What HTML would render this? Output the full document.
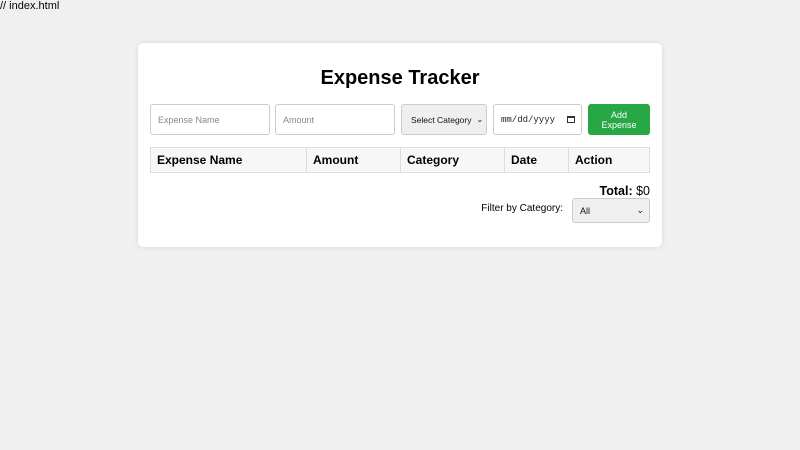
<!DOCTYPE html>
<html><head><style>
*{box-sizing:border-box;margin:0;padding:0}
body{width:800px;height:450px;background:#f0f0f0;font-family:"Liberation Sans",sans-serif;position:relative;overflow:hidden}
.a{position:absolute;white-space:nowrap}
.card{left:138px;top:43px;width:524px;height:204px;background:#fff;border-radius:5px;box-shadow:0 0 6px rgba(0,0,0,.1)}
.inp{border:1px solid #ccc;border-radius:3px;background:#fff;font-size:9px;color:#888;padding-left:7px;display:flex;align-items:center}
th{font-weight:bold;text-align:left;font-size:12px;padding-left:6px;border:1px solid #ddd;background:#f7f7f7;height:25px}
table{border-collapse:collapse}
</style></head><body>
<div class="a" style="left:0;top:0;font-size:11px">// index.html</div>
<div class="a card"></div>
<div class="a" style="left:138px;width:524px;top:67px;text-align:center;font-size:20px;font-weight:bold">Expense Tracker</div>
<div class="a inp" style="left:150px;top:104px;width:120px;height:31px">Expense Name</div>
<div class="a inp" style="left:275px;top:104px;width:120px;height:31px">Amount</div>
<div class="a inp" style="left:401px;top:104px;width:86px;height:31px;background:#efefef;color:#111;font-size:8.5px;padding-left:9px">Select Category<span style="margin-left:5px;font-size:8px">&#x2304;</span></div>
<div class="a inp" style="left:493px;top:104px;width:89px;height:31px;color:#222;font-family:'Liberation Mono',monospace;font-size:9px">mm/dd/yyyy<span style="display:inline-block;width:8px;height:7px;border:1.5px solid #333;border-top-width:2.5px;margin-left:12px"></span></div>
<div class="a" style="left:588px;top:104px;width:62px;height:31px;background:#28a745;border-radius:3px;color:#fff;font-size:9px;text-align:center;padding-top:6px;line-height:10px">Add<br>Expense</div>
<table class="a" style="left:150px;top:147px;width:500px">
<tr><th style="width:156px">Expense Name</th><th style="width:94px">Amount</th><th style="width:104px">Category</th><th style="width:64px">Date</th><th>Action</th></tr></table>
<div class="a" style="right:150px;top:184px;font-size:12.5px"><b>Total:</b> $0</div>
<div class="a" style="right:237px;top:203px;font-size:10px">Filter by Category:</div>
<div class="a inp" style="left:572px;top:198px;width:78px;height:25px;background:#efefef;color:#111;font-size:9px;justify-content:space-between;padding-right:5px">All<span>&#x2304;</span></div>
</body></html>
